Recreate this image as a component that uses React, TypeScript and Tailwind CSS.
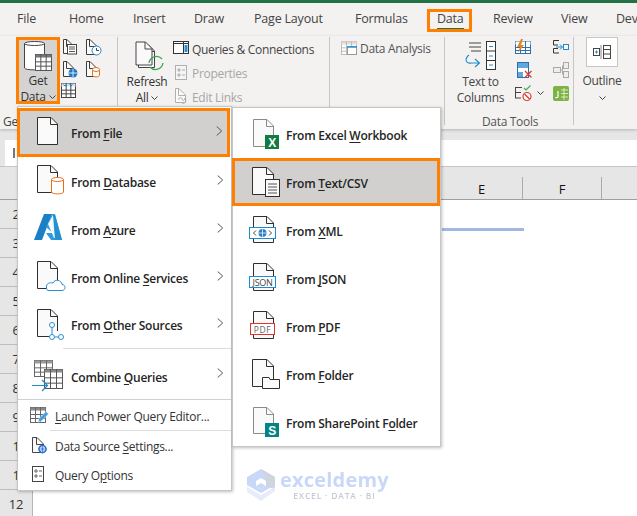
import React from "react";

const INK = "#3c3c3c";
const BLUE = "#1e8bcd";
const ORANGE = "#e8701a";

const page = (x: number, y: number, w: number, h: number, stroke = INK) => (
  <>
    <path d={`M${x + 0.5} ${y + 0.5}H${x + w - 7}L${x + w - 0.5} ${y + 7}V${y + h - 0.5}H${x + 0.5}Z`} fill="#fafafa" stroke={stroke} />
    <path d={`M${x + w - 7.5} ${y + 0.5}V${y + 7.5}H${x + w - 0.5}`} fill="none" stroke={stroke} />
  </>
);

const grid = (x: number, y: number, w: number, h: number, stroke = "#555", head = "#8a8a8a") => {
  const cw = w / 3;
  const ch = (h - 3) / 3;
  return (
    <>
      <rect x={x + 0.5} y={y + 0.5} width={w} height={h} fill="#fff" stroke={stroke} />
      <rect x={x + 0.5} y={y + 0.5} width={w} height={3} fill={head} />
      {[1, 2].map((i) => (
        <path key={`v${i}`} d={`M${x + 0.5 + cw * i} ${y}V${y + h}`} stroke={stroke} />
      ))}
      {[1, 2].map((i) => (
        <path key={`h${i}`} d={`M${x} ${y + 3.5 + ch * i}H${x + w}`} stroke={stroke} />
      ))}
    </>
  );
};

const Svg36 = ({ children }: { children: React.ReactNode }) => (
  <svg width="36" height="36" viewBox="0 0 36 36" className="shrink-0 overflow-visible">
    {children}
  </svg>
);

const Mini = ({ w = 18, h = 18, children, className = "" }: { w?: number; h?: number; children: React.ReactNode; className?: string }) => (
  <svg width={w} height={h} viewBox={`0 0 ${w} ${h}`} className={`shrink-0 overflow-visible ${className}`}>
    {children}
  </svg>
);

const cyl = (x: number, y: number, w: number, h: number, stroke: string, fill = "#fff") => (
  <>
    <path d={`M${x + 0.5} ${y + 2.5}V${y + h - 2}C${x + 0.5} ${y + h + 0.5} ${x + w - 0.5} ${y + h + 0.5} ${x + w - 0.5} ${y + h - 2}V${y + 2.5}`} fill={fill} stroke={stroke} />
    <ellipse cx={x + w / 2} cy={y + 2.5} rx={w / 2 - 0.5} ry={2} fill={fill} stroke={stroke} />
  </>
);

const leftIcons: Record<string, React.ReactNode> = {
  file: <Svg36>{page(4, 2, 21, 28, "#2f2f2f")}</Svg36>,
  database: (
    <Svg36>
      {page(4, 2, 21, 28, "#2f2f2f")}
      {cyl(18, 14, 13, 17, ORANGE)}
    </Svg36>
  ),
  azure: (
    <Svg36>
      <path d="M11 3H19L9 29H1Z" fill="#1a7fc4" />
      <path d="M19 3H22L29 29H18L13 22H20L13 16Z" fill="#2e9bdc" />
      <path d="M20 4L27 27H21L15 13Z" fill="#fff" opacity="0.95" />
      <path d="M20 4H22L29 29H22Z" fill="#2590d2" />
    </Svg36>
  ),
  online: (
    <Svg36>
      {page(4, 2, 21, 28, "#2f2f2f")}
      <path d="M15 31.5H29C33 31.5 33 25.5 29 25.5C28.5 21 22 19.500 20 24C16.500 23 13 25 13.500 28C13.500 30 14 31.500 15 31.500Z" fill="#fff" stroke="#2a8fd0" />
    </Svg36>
  ),
  other: (
    <Svg36>
      {page(4, 2, 21, 28, "#2f2f2f")}
      <rect x="16" y="24" width="16" height="9" fill="#fff" />
      <path d="M19 20.500V27.500M21.500 30H25.500" stroke="#2a8fd0" />
      <circle cx="19" cy="18" r="2.500" fill="#fff" stroke="#2a8fd0" />
      <circle cx="19" cy="30" r="2.500" fill="#fff" stroke="#2a8fd0" />
      <circle cx="28" cy="30" r="2.500" fill="#fff" stroke="#2a8fd0" />
    </Svg36>
  ),
  combine: (
    <Svg36>
      {grid(1, 4, 18, 16, "#666", "#9a9a9a")}
      {grid(11, 13, 18, 19, "#555", "#8a8a8a")}
      <path d="M-1 29.500H14M9 24L14.500 29.500L9 35" fill="none" stroke={BLUE} strokeWidth="1.200" />
    </Svg36>
  ),
};

const excelTile = (fill: string, letter: string) => (
  <>
    <rect x="15" y="18" width="14" height="14" fill={fill} />
    <text x="22" y="29.500" textAnchor="middle" fontSize="12" fontWeight="700" fill="#fff" fontFamily="Liberation Sans, sans-serif">
      {letter}
    </text>
  </>
);

const rightIcons: Record<string, React.ReactNode> = {
  excel: (
    <Svg36>
      {page(3, 2, 21, 28, "#8a8a8a")}
      {excelTile("#107c41", "X")}
    </Svg36>
  ),
  text: (
    <Svg36>
      {page(2, 2, 22, 28, "#2f2f2f")}
      <rect x="15.500" y="14.500" width="14" height="17" fill="#fafafa" stroke="#2f2f2f" />
      <path d="M18 19H27M18 22H27M18 25H27M18 28H27" stroke="#555" />
    </Svg36>
  ),
  xml: (
    <Svg36>
      {page(3, 3, 21, 27, "#2f2f2f")}
      <rect x="-0.500" y="14.500" width="26" height="11" fill="#fff" stroke={BLUE} />
      <circle cx="12.500" cy="20" r="4" fill="#2a82c9" />
      <path d="M8.500 20H16.500M12.500 16V24" stroke="#fff" strokeWidth="0.700" />
      <path d="M6 17.500L3.500 20L6 22.500M19 17.500L21.500 20L19 22.500" fill="none" stroke="#444" />
    </Svg36>
  ),
  json: (
    <Svg36>
      {page(3, 2, 21, 28, "#2f2f2f")}
      <rect x="-0.500" y="15.500" width="26" height="11" fill="#fff" stroke={BLUE} />
      <text x="12.500" y="24.500" textAnchor="middle" fontSize="9" fill="#444" fontFamily="Open Sans, sans-serif">
        JSON
      </text>
    </Svg36>
  ),
  pdf: (
    <Svg36>
      {page(3, 2, 21, 28, "#2f2f2f")}
      <rect x="0.500" y="14.500" width="24" height="11" fill="#fff" stroke="#e5332a" />
      <text x="12.500" y="23.500" textAnchor="middle" fontSize="8.500" letterSpacing="0.600" fill="#666" fontFamily="Open Sans, sans-serif">
        PDF
      </text>
    </Svg36>
  ),
  folder: (
    <Svg36>
      {page(2, 2, 22, 28, "#2f2f2f")}
      <path d="M12.500 31.500V20.500H19L20 22.500H29.500V31.500Z" fill="#fafafa" stroke="#2f2f2f" />
    </Svg36>
  ),
  share: (
    <Svg36>
      {page(3, 2, 21, 27, "#8a8a8a")}
      {excelTile("#038387", "S")}
    </Svg36>
  ),
};

const Chevron = () => (
  <svg width="7" height="10" viewBox="0 0 7 10" className="shrink-0 mb-[3px]">
    <path d="M0.700 0.500L5.700 5L0.700 9.500" fill="none" stroke="#555" strokeWidth="1" />
  </svg>
);

const Down = ({ className = "" }: { className?: string }) => (
  <svg width="7" height="4" viewBox="0 0 7 4" className={`inline-block shrink-0 ${className}`}>
    <path d="M0.500 0.500L3.500 3.500L6.500 0.500" fill="none" stroke="#444" />
  </svg>
);

const Label = ({ a, u, b }: { a: string; u: string; b: string }) => (
  <span>
    {a}
    <u className="underline-offset-2">{u}</u>
    {b}
  </span>
);

const LeftRow = ({ icon, a, u, b, cls, text = "pt-[3px]", hi }: { icon: string; a: string; u: string; b: string; cls: string; text?: string; hi?: boolean }) => (
  <div className={`flex items-center w-[213px] pl-[15px] pr-[7px] ${cls} ${hi ? "-ml-px pl-[16px] pr-[6px] bg-[#d1d0ce] outline-[3px] outline-[#ff8000] outline -outline-offset-[3px]" : ""}`}>
    {leftIcons[icon]}
    <div className={`ml-[2px] flex-1 text-[12px] tracking-[-0.25px] font-semibold text-[#252525] ${text}`}>
      <Label a={a} u={u} b={b} />
    </div>
    <Chevron />
  </div>
);

const RightRow = ({ icon, a, u, b, hi, cls = "h-[48px]" }: { icon: string; a: string; u: string; b: string; hi?: boolean; cls?: string }) => (
  <div className={`flex items-center ${cls} ${hi ? "-ml-px pl-[18px] -mt-px mb-px pt-[1px] bg-[#d1d0ce] outline-[3px] outline-[#ff8000] outline -outline-offset-[3px]" : "pl-[17px]"}`}>
    {rightIcons[icon]}
    <div className="pt-[2px] text-[12px] tracking-[-0.25px] font-semibold text-[#252525]">
      <Label a={a} u={u} b={b} />
    </div>
  </div>
);

const tabs: [string, string][] = [
  ["File", "w-[52px]"],
  ["Home", "w-[64px]"],
  ["Insert", "w-[61px]"],
  ["Draw", "w-[60px]"],
  ["Page Layout", "w-[101px]"],
  ["Formulas", "w-[82px]"],
  ["Data", "w-[56px]"],
  ["Review", "w-[68px]"],
  ["View", "w-[55px]"],
  ["Dev", "w-[21px]"],
];

const SmallRow = ({ a, u, b, cls, icon }: { a: string; u: string; b: string; cls: string; icon: React.ReactNode }) => (
  <div className={`flex items-center pl-[11px] ${cls}`}>
    <Mini w={20} h={20}>{icon}</Mini>
    <div className="ml-[6px] pt-[3px] text-[12px] text-[#333]">
      <Label a={a} u={u} b={b} />
    </div>
  </div>
);

const Divider = () => <div className="w-px h-[88px] mt-[1px] bg-[#c8c6c4] shrink-0" />;

export default function App() {
  return (
    <div className="relative w-[637px] h-[516px] overflow-hidden bg-white text-[12px] tracking-[-0.3px] text-[#444] leading-none" style={{ fontFamily: '"Open Sans", "Noto Sans", sans-serif' }}>
      <div className="h-[3px] bg-[#217346]" />
      {/* tabs */}
      <div className="flex items-center h-[33px] pl-[17px] bg-[#f3f2f1] whitespace-nowrap">
        {tabs.map(([t, w]) => (
          <div key={t} className={`${w} shrink-0 text-[12.5px] tracking-[-0.2px] text-[#444]`}>
            {t === "Data" ? (
              <span className="relative inline-block">
                {t}
                <span className="absolute -left-[10px] -right-[8px] -top-[4px] -bottom-[6px] border-[3px] border-[#ff8000]" />
                <span className="absolute left-0 right-0 -bottom-[3px] h-[1px] bg-[#217346]" />
              </span>
            ) : (
              t
            )}
          </div>
        ))}
      </div>

      {/* ribbon */}
      <div className="flex h-[93px] bg-[#f3f2f1] shadow-[0_1px_3px_rgba(0,0,0,0.22)] relative whitespace-nowrap">
        {/* Get & Transform group */}
        <div className="w-[117px] shrink-0 flex flex-col">
          <div className="flex pl-[16px] pt-[1px] h-[79px]">
            <div className="w-[44px] h-[67px] border-[3px] border-[#ff8000] bg-[#d4d3d1] flex flex-col items-center">
              <Mini w={28} h={30} className="mt-[1px]">
                {cyl(0, 0, 21, 29, "#444")}
                {grid(11, 13, 16, 16, "#555", "#777")}
              </Mini>
              <div className="mt-[2px] leading-[16px] text-center text-[#333]">Get</div>
              <div className="leading-[16px] text-center text-[#333] flex items-center gap-[3px]">
                Data <Down />
              </div>
            </div>
            <div className="ml-[2px] flex flex-col gap-[5px] pt-[2px]">
              <Mini w={16} h={17}>
                {page(1, 0, 11, 15, INK)}
                <rect x="5.500" y="5.500" width="9" height="9.500" fill="#fff" stroke="#444" />
                <path d="M7 8H13M7 10H13M7 12.500H13" stroke="#555" />
              </Mini>
              <Mini w={18} h={17}>
                {page(1, 0, 11, 16, INK)}
                <circle cx="11" cy="12" r="4.500" fill="#1e78c8" />
                <path d="M6.500 12H15.500M11 7.500V16.500" stroke="#fff" strokeWidth="0.800" />
              </Mini>
              <Mini w={16} h={16} className="-ml-[1px]">
                {grid(0, 0, 14, 14, "#444", "#cfe3f5")}
                <path d="M2.500 1.500L4 3L5.500 1.500M8.500 1.500L10 3L11.500 1.500" fill="none" stroke="#1e8bcd" />
              </Mini>
            </div>
            <div className="ml-[6px] flex flex-col gap-[5px] pt-[2px]">
              <Mini w={17} h={17}>
                {page(0, 0, 11, 16, INK)}
                <circle cx="10.500" cy="11.500" r="4.500" fill="#fff" stroke="#1e8bcd" />
                <path d="M10.500 9V11.500H13" fill="none" stroke="#444" />
              </Mini>
              <Mini w={17} h={17}>
                {page(0, 0, 11, 16, INK)}
                {cyl(6, 6, 8, 10, ORANGE)}
              </Mini>
            </div>
          </div>
          <div className="pl-[3px] pt-[1px] text-[#444]">Ge</div>
        </div>
        <Divider />

        {/* Queries */}
        <div className="w-[211px] shrink-0 flex">
          <div className="w-[54px] shrink-0 flex flex-col items-center pl-[4px] pt-[5px]">
            <Mini w={30} h={31} className="ml-[6px]">
              {page(3, 3, 17, 24, "#444")}
              {page(0.500, 0.500, 17, 24, "#444")}
              <path d="M14 22A7.500 7.500 0 0 1 27 18M28 22A7.500 7.500 0 0 1 15 26" fill="none" stroke="#3aa655" strokeWidth="1.300" />
            </Mini>
            <div className="mt-[2px] leading-[16px] text-[#333]">Refresh</div>
            <div className="leading-[16px] text-[#333] flex items-center gap-[3px]">
              All <Down />
            </div>
          </div>
          <div className="flex flex-col pt-[5px] pl-[1px]">
            <div className="flex items-center h-[14px] gap-[3px] text-[#444]">
              <Mini w={16} h={14}>
                <rect x="0.500" y="0.500" width="15" height="12" fill="#fff" stroke="#333" />
                <path d="M0.500 2.500H15.500" stroke="#333" />
                <path d="M10.500 1V12" stroke="#333" />
                <rect x="11.500" y="4" width="3" height="7" fill="#2a8fd0" />
              </Mini>
              <span className="pt-[3px]">Queries &amp; Connections</span>
            </div>
            <div className="flex items-center h-[14px] mt-[10px] gap-[3px] text-[#a6a6a6] pl-[2px]">
              <Mini w={13} h={15}>
                <rect x="0.500" y="0.500" width="11" height="14" fill="#f5f5f5" stroke="#b0b0b0" />
                <path d="M3 4H5V6H3ZM3 9H5V11H3ZM7 5H10M7 10H10" fill="none" stroke="#aaa" />
              </Mini>
              <span className="ml-[1px] pt-[3px]">Properties</span>
            </div>
            <div className="flex items-center h-[14px] mt-[10px] gap-[3px] text-[#a6a6a6] pl-[2px]">
              <Mini w={13} h={16}>
                {page(0, 0, 11, 15, "#b0b0b0")}
                <path d="M4 12C3 9 7 9 7 11C7 13 10 13 10 10C12 13 10 16 7 15" fill="none" stroke="#aaa" />
              </Mini>
              <span className="ml-[1px] pt-[3px]">Edit Links</span>
            </div>
          </div>
        </div>
        <Divider />

        {/* Analyze */}
        <div className="w-[114px] shrink-0 pl-[11px] pt-[5px] flex items-start gap-[3px] text-[#555]">
          <Mini w={16} h={14}>
            {grid(0, 0, 15, 13, "#bbb", "#ddd")}
            <rect x="6.500" y="5.500" width="9" height="8" fill="#fff" stroke="#999" />
            <path d="M6 6H16" stroke="#2a8fd0" strokeWidth="1.500" />
          </Mini>
          <span className="pt-[2px]">Data Analysis</span>
        </div>
        <Divider />

        {/* Data tools */}
        <div className="w-[128px] shrink-0 flex flex-col">
          <div className="flex h-[79px]">
            <div className="w-[70px] shrink-0 flex flex-col items-center pl-[1px] pt-[5px]">
              <Mini w={31} h={30}>
                <path d="M4 2H16M4 6H16M6 10H16" stroke="#444" />
                <rect x="21.500" y="0.500" width="9" height="28" fill="#fff" stroke="#333" />
                <path d="M21 10H31M21 19.500H31" stroke="#333" />
                <path d="M24 5.500H28M24 15H28M24 24H28" stroke={BLUE} />
                <path d="M4 14C-1 18 1 23 6 22H14M10 18L14.500 22L10 26" fill="none" stroke={BLUE} strokeWidth="1.100" />
              </Mini>
              <div className="mt-[3px] leading-[16px] text-[#444]">Text to</div>
              <div className="leading-[16px] text-[#444]">Columns</div>
            </div>
            <div className="w-[38px] shrink-0 flex flex-col pt-[3px] gap-[7px]">
              <Mini w={16} h={16}>
                {grid(0, 2, 15, 12, "#2a6fb0", "#fff")}
                <path d="M6 0L2 8H5L3 14L9 6H6L8 0Z" fill="#e8871a" />
              </Mini>
              <Mini w={16} h={16} className="ml-[2px]">
                <rect x="0.500" y="0.500" width="11" height="15" fill="#fff" stroke="#2a6fb0" />
                <rect x="1" y="1" width="10" height="5" fill="#5ea8dd" />
                <rect x="1" y="10" width="5" height="5" fill="#5ea8dd" />
                <path d="M8 9L14.500 15.500M14.500 9L8 15.500" stroke="#e0382e" strokeWidth="1.300" />
              </Mini>
              <div className="flex items-center">
                <Mini w={17} h={16}>
                  <path d="M0 2.500H7M0 7.500H6M0 13H6M0.500 2V8M0.500 8V13" fill="none" stroke="#444" />
                  <path d="M9 3L11 5L15.500 0.500" fill="none" stroke="#3aa655" strokeWidth="1.100" />
                  <circle cx="12" cy="11.500" r="4" fill="#fff" stroke="#e0382e" strokeWidth="1.200" />
                  <path d="M9.500 9L14.500 14" stroke="#e0382e" strokeWidth="1.200" />
                </Mini>
                <Down className="ml-[5px]" />
              </div>
            </div>
            <div className="flex flex-col pt-[3px] gap-[7px]">
              <Mini w={16} h={16}>
                <path d="M6 1.500H0.500V6H5M5 9.500H0.500V14H6" fill="none" stroke="#333" />
                <path d="M3 8H9M7 5.500L9.500 8L7 10.500" fill="none" stroke={BLUE} />
                <rect x="10.500" y="5.500" width="5" height="5" fill="#fff" stroke={BLUE} />
              </Mini>
              <Mini w={16} h={16}>
                <rect x="0.500" y="5.500" width="7" height="5" fill="#eee" stroke="#aaa" />
                <rect x="10.500" y="0.500" width="5" height="6" fill="#eee" stroke="#aaa" />
                <rect x="10.500" y="9.500" width="5" height="6" fill="#eee" stroke="#aaa" />
                <path d="M8 8H9.500M9.500 3.500V12.500" stroke="#aaa" />
              </Mini>
              <Mini w={16} h={16}>
                <rect x="0" y="1" width="16" height="15" rx="2" fill="#7cb342" />
                <path d="M8 5H15M8 8.500H15M8 12H15M11 3V15" stroke="#fff" strokeWidth="0.700" />
                <path d="M5 6V11.500C5 13 3 13 2.500 12" fill="none" stroke="#fff" strokeWidth="1.200" />
              </Mini>
            </div>
          </div>
          <div className="text-center pl-[2px] pt-[1px] text-[#555]">Data Tools</div>
        </div>
        <Divider />

        {/* Outline */}
        <div className="flex-1 flex flex-col items-start pl-[12px] pt-[1px]">
          <div className="w-[32px] h-[30px] bg-white border border-[#c8c6c4] flex items-center justify-center">
            <Mini w={18} h={14}>
              <rect x="0.500" y="3.500" width="6" height="7" fill="#fff" stroke="#444" />
              <path d="M2 7H5M3.500 5.500V8.500" stroke={BLUE} />
              <rect x="10.500" y="0.500" width="7" height="13" fill="#fff" stroke="#444" />
              <path d="M10 4.500H18M10 9H18" stroke="#444" />
              <path d="M8 0V14" stroke="#888" />
            </Mini>
          </div>
          <div className="mt-[8px] w-[32px] flex justify-center text-[#444]">Outline</div>
          <div className="mt-[9px] w-[32px] flex justify-center">
            <Down />
          </div>
        </div>
      </div>

      {/* formula bar */}
      <div className="h-[37px] bg-[#e6e6e6] pt-[11px] pl-[5px]">
        <div className="h-[26px] bg-white flex items-center pl-[8px]">
          <div className="w-[2px] h-[10px] bg-[#777]" />
        </div>
      </div>

      {/* headers */}
      <div className="flex h-[34px] bg-[#e6e6e6] border-y border-t-[#c6c6c6] border-b-[#9f9f9f] text-[13px] text-[#111]">
        <div className="w-[441px]" />
        <div className="w-[82px] flex items-end pb-[3px] justify-center border-r border-r-[#aaa] mt-[10px]">E</div>
        <div className="w-[79px] flex items-end pb-[3px] justify-center border-r border-r-[#aaa] mt-[10px]">F</div>
      </div>

      {/* sheet */}
      <div className="flex">
        <div className="w-[33px] bg-[#e6e6e6] border-r border-r-[#b5b5b5]">
          {["2", "3", "4", "5", "6", "7", "8", "9", "1", "1 ", "12"].map((n) => (
            <div key={n} className="h-[29px] flex items-center justify-center text-[13px] text-[#333] border-b border-b-[#bdbdbd]">
              {n}
            </div>
          ))}
        </div>
        <div className="flex-1 pt-[28px] pl-[409px]">
          <div className="w-[82px] h-[3px] bg-[#a3b8e0]" />
        </div>
      </div>

      {/* watermark */}
      <div className="absolute left-[247px] top-[468px] flex items-start blur-[0.4px]">
        <svg width="30" height="33" viewBox="0 0 30 33">
          <path d="M14 1L28 9V17L14 25L0 17V9Z" fill="#c9d7f8" />
          <path d="M14 1L28 9V22L19 17V10Z" fill="#cfd5dc" />
          <path d="M0 19L14 27L28 19V23L14 33L0 24Z" fill="#e6ecfa" />
          <path d="M14 10L19 13V18L14 21L9 18V13Z" fill="#fff" />
          <path d="M14 15L19 18L14 21L9 18Z" fill="#c9d7f8" />
        </svg>
        <div className="ml-[3px] pt-[2px] flex flex-col items-center tracking-normal">
          <div className="text-[20px] leading-[20px] font-bold text-[#c9d7f8] tracking-[0.2px]">exceldemy</div>
          <div className="text-[8.500px] leading-[10px] mt-[1px] text-[#c4cbd6] font-semibold tracking-[0.8px]">EXCEL · DATA · BI</div>
        </div>
      </div>

      {/* left menu */}
      <div className="absolute left-[17px] top-[106px] w-[215px] h-[385px] bg-white border border-[#c6c6c6] shadow-[1px_1px_3px_rgba(0,0,0,0.25)] pt-[1px]">
        <LeftRow icon="file" a="From " u="F" b="ile" cls="h-[49px]" hi />
        <LeftRow icon="database" a="From " u="D" b="atabase" cls="h-[48px]" />
        <LeftRow icon="azure" a="From " u="A" b="zure" cls="h-[48px]" />
        <LeftRow icon="online" a="From Online " u="S" b="ervices" cls="h-[48px]" />
        <LeftRow icon="other" a="From " u="O" b="ther Sources" cls="h-[47px]" />
        <div className="h-px ml-[45px] bg-[#dcdcdc]" />
        <LeftRow icon="combine" a="Combine " u="Q" b="ueries" cls="h-[50px]" text="pt-[7px]" />
        <div className="h-px bg-[#d0d0d0]" />
        <SmallRow
          a=""
          u="L"
          b="aunch Power Query Editor..."
          cls="h-[30px]"
          icon={
            <>
              {grid(1, 2, 15, 15, "#666", "#888")}
              <path d="M9 17L10 13.500L17 6.500L19.500 9L12.500 16Z" fill="#3f9fe0" stroke="#fff" strokeWidth="0.500" />
            </>
          }
        />
        <div className="h-px ml-[32px] bg-[#dcdcdc]" />
        <SmallRow
          a="Data Source "
          u="S"
          b="ettings..."
          cls="h-[29px]"
          icon={
            <>
              {page(3, 1, 12, 16, "#444")}
              <circle cx="13.500" cy="13" r="3.500" fill="#fff" stroke="#2a6fcf" strokeWidth="1.500" />
              <path d="M13.500 8.500V17.500M9 13H18M10.500 10L16.500 16M16.500 10L10.500 16" stroke="#2a6fcf" strokeWidth="0.700" />
            </>
          }
        />
        <SmallRow
          a="Query O"
          u="p"
          b="tions"
          cls="h-[28px]"
          icon={
            <>
              <rect x="3.500" y="2.500" width="11" height="15" fill="#fff" stroke="#444" />
              <path d="M6 6H8V8H6ZM6 11H8V13H6ZM10 7H13M10 12H13" fill="none" stroke="#666" />
            </>
          }
        />
      </div>

      {/* right menu */}
      <div className="absolute left-[232px] top-[107px] w-[209px] h-[340px] bg-white border border-[#c6c6c6] shadow-[1px_1px_3px_rgba(0,0,0,0.25)] pt-[3px]">
        <RightRow icon="excel" a="From Excel " u="W" b="orkbook" />
        <RightRow icon="text" a="From " u="T" b="ext/CSV" hi />
        <RightRow icon="xml" a="From " u="X" b="ML" />
        <RightRow icon="json" a="From " u="J" b="SON" />
        <RightRow icon="pdf" a="From " u="P" b="DF" />
        <RightRow icon="folder" a="From " u="F" b="older" />
        <RightRow icon="share" a="From SharePoint F" u="o" b="lder" cls="h-[47px]" />
      </div>
    </div>
  );
}
